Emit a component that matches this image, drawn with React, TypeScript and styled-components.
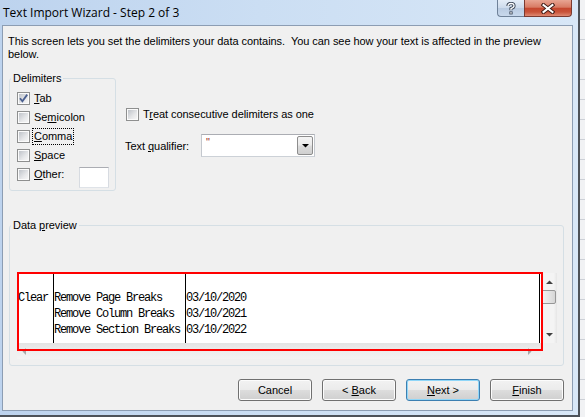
import React from 'react';
import styled, { createGlobalStyle, css } from 'styled-components';

const GlobalStyle = createGlobalStyle`
  html, body { margin: 0; padding: 0; }
  body {
    width: 585px;
    height: 417px;
    overflow: hidden;
    font-family: "Liberation Sans", Arial, sans-serif;
    background: repeating-linear-gradient(to bottom, #f1f2f4 0 19px, #cdd1d7 19px 20px);
  }
  u { text-decoration-thickness: 1px; text-underline-offset: 1px; }
`;

const Window = styled.div`
  width: 580px;
  height: 417px;
  box-sizing: border-box;
  display: flex;
  flex-direction: column;
  padding: 0 5px 4px 2px;
  border-right: 2px solid #4d5259;
  border-bottom: 2px solid #4d5259;
  background: linear-gradient(to right, #bdd3ee 0%, #cbdef3 45%, #d8e7f7 100%);
`;

const TitleBar = styled.div`
  height: 25px;
  flex: none;
  display: flex;
  align-items: center;
`;

const Title = styled.div`
  padding-left: 1px;
  font-family: "Open Sans", "Liberation Sans", sans-serif;
  font-size: 12px;
  color: #000;
`;

const Captions = styled.div`
  margin-left: auto;
  margin-right: 1px;
  align-self: flex-start;
  display: flex;
`;

const CaptionBtn = styled.div<{ $close?: boolean }>`
  height: 17px;
  box-sizing: border-box;
  display: flex;
  align-items: center;
  justify-content: center;
  border: 1px solid #6f8299;
  border-top: none;
  ${(p) =>
    p.$close
      ? css`
          width: 48px;
          border-color: #7b3a30;
          border-radius: 0 0 4px 0;
          background: linear-gradient(#e8a593 0%, #d87b64 45%, #c5472e 52%, #c9543a 75%, #df8a73 100%);
        `
      : css`
          width: 27px;
          border-right: none;
          border-radius: 0 0 0 4px;
          background: linear-gradient(#e4edf7 0%, #cddbec 48%, #b9cbe1 52%, #c8d8ec 100%);
        `}
`;

const Client = styled.div`
  flex: 1;
  display: flex;
  flex-direction: column;
  border: 1px solid #8c9db3;
  background: #f0f0f0;
  padding: 0 8px 0 5px;
  font-size: 11px;
  color: #000;
`;

const Intro = styled.p`
  margin: 9px 0 0;
  line-height: 13px;
  letter-spacing: -0.05px;
`;

const OptionsRow = styled.div`
  display: flex;
  align-items: flex-start;
  gap: 10px;
  margin: 10px 0 0 1px;
`;

const Group = styled.fieldset<{ $w: number; $pt: number }>`
  width: ${(p) => p.$w}px;
  box-sizing: border-box;
  min-inline-size: 0;
  margin: 0;
  padding: ${(p) => p.$pt}px 6px 6px 1px;
  border: 1px solid #d5dfe5;
  border-radius: 3px;
`;

const Legend = styled.legend`
  margin-left: 0;
  padding: 0 2px;
  line-height: 14px;
  font-size: 11px;
  letter-spacing: -0.05px;
`;

const CheckList = styled.div`
  display: flex;
  flex-direction: column;
  padding-left: 6px;
`;

const CheckRow = styled.div`
  height: 19px;
  display: flex;
  align-items: center;
  gap: 4px;
`;

const Box = styled.span`
  width: 13px;
  height: 13px;
  flex: none;
  box-sizing: border-box;
  position: relative;
  border: 1px solid #8e8f8f;
  padding: 1px;
  background: linear-gradient(135deg, #bfc3c9 0%, #e6e7e9 60%, #f6f6f6 100%) content-box, #fbfbfb;
  svg { position: absolute; left: -1px; top: -1px; }
`;

const Label = styled.span<{ $focus?: boolean }>`
  line-height: 13px;
  letter-spacing: -0.05px;
  white-space: nowrap;
  ${(p) =>
    p.$focus &&
    css`
      outline: 1px dotted #000;
      outline-offset: 1px;
    `}
`;

const SmallInput = styled.div`
  width: 30px;
  height: 21px;
  box-sizing: border-box;
  margin-left: auto;
  align-self: flex-start;
  margin-top: 2px;
  background: #fff;
  border: 1px solid #abadb3;
  border-color: #abadb3 #d7dbe1 #dfe3e8 #d7dbe1;
`;

const SideColumn = styled.div`
  display: flex;
  flex-direction: column;
  margin-top: 34px;
`;

const QualifierRow = styled.div`
  display: flex;
  align-items: center;
  margin-top: 10px;
  margin-left: -1px;
`;

const QualifierLabel = styled.span`
  width: 76px;
  letter-spacing: -0.05px;
`;

const Combo = styled.div`
  width: 114px;
  height: 23px;
  box-sizing: border-box;
  display: flex;
  background: #fff;
  border: 1px solid #abadb3;
  border-color: #abadb3 #c4c8ce #ccd1d7 #c4c8ce;
`;

const ComboValue = styled.span`
  flex: 1;
  padding: 1px 0 0 4px;
  line-height: 13px;
  color: #9b2a1c;
`;

const DropBtn = styled.span`
  width: 16px;
  height: 19px;
  box-sizing: border-box;
  margin: 1px 1px 1px 0;
  display: flex;
  align-items: center;
  justify-content: center;
  border: 1px solid #8d8d8d;
  border-radius: 2px;
  background: linear-gradient(#f4f4f4 0%, #ebebeb 48%, #dcdcdc 52%, #cfcfcf 100%);
`;

const PreviewGroup = styled(Group)`
  margin: 27px 0 0 1px;
`;

const Preview = styled.div`
  position: relative;
  margin-left: 6px;
  display: grid;
  grid-template-columns: 524px 16px;
  grid-template-rows: 70px 16px;
`;

const DataArea = styled.div`
  display: flex;
  background: #fff;
  overflow: hidden;
`;

const DataColumn = styled.div<{ $w: number; $pad?: number }>`
  width: ${(p) => p.$w}px;
  box-sizing: border-box;
  flex: none;
  padding: 17px 0 0 ${(p) => p.$pad ?? 0}px;
  border-right: 1px solid #000;
  font-family: "Liberation Mono", "Courier New", monospace;
  font-size: 12px;
  letter-spacing: -1.2px;
  line-height: 16px;
  white-space: pre;
  color: #000;
`;

const VScroll = styled.div`
  display: flex;
  flex-direction: column;
  background: linear-gradient(to right, #e6e6e6 0%, #f4f4f4 20%, #f4f4f4 80%, #e6e6e6 100%);
`;

const ArrowCell = styled.div<{ $h: number }>`
  height: ${(p) => p.$h}px;
  flex: none;
  display: flex;
  align-items: center;
  justify-content: center;
`;

const Thumb = styled.div`
  width: 15px;
  height: 14px;
  box-sizing: border-box;
  border: 1px solid #979797;
  border-radius: 2px;
  background: linear-gradient(to right, #f3f3f3 0%, #e6e6e6 50%, #d6d6d6 100%);
`;

const Spacer = styled.div`
  flex: 1;
`;

const HScroll = styled.div`
  display: flex;
  align-items: center;
  justify-content: space-between;
  padding: 0 9px 0 5px;
  background: linear-gradient(#e3e3e3 0%, #ececec 40%, #f3f3f3 100%);
`;

const Corner = styled.div`
  background: #f0f0f0;
`;

const Annotation = styled.div`
  position: absolute;
  left: 0;
  top: -1px;
  width: 526px;
  height: 79px;
  box-sizing: border-box;
  border: 2px solid #ff0000;
  pointer-events: none;
`;

const ButtonRow = styled.div`
  display: flex;
  justify-content: flex-end;
  gap: 10px;
  margin-top: 13px;
`;

const Button = styled.button<{ $default?: boolean }>`
  width: 74px;
  height: 22px;
  box-sizing: border-box;
  padding: 0;
  font-family: "Liberation Sans", Arial, sans-serif;
  font-size: 11px;
  color: #000;
  border: 1px solid #707070;
  border-radius: 3px;
  background: linear-gradient(#f2f2f2 0%, #ebebeb 50%, #dddddd 51%, #cfcfcf 100%);
  box-shadow: inset 0 0 0 1px #fcfcfc;
  ${(p) =>
    p.$default &&
    css`
      border-color: #3c7fb1;
      box-shadow: inset 0 0 0 1px #8fd6f8;
    `}
`;

const Check = () => (
  <svg width="13" height="13" viewBox="0 0 13 13">
    <path d="M3 6.2 L5.4 9.2 L10.2 2.6" fill="none" stroke="#4a5f8f" strokeWidth="1.8" />
  </svg>
);

const Tri = ({ dir, color }: { dir: 'up' | 'down' | 'left' | 'right'; color: string }) => {
  const pts = {
    up: '0,4 7,4 3.5,0.5',
    down: '0,0 7,0 3.5,3.5',
    left: '4,0 4,7 0.5,3.5',
    right: '0,0 0,7 3.5,3.5',
  }[dir];
  const vertical = dir === 'up' || dir === 'down';
  return (
    <svg width={vertical ? 7 : 4} height={vertical ? 4 : 7} viewBox={vertical ? '0 0 7 4' : '0 0 4 7'}>
      <polygon points={pts} fill={color} />
    </svg>
  );
};

const HelpIcon = () => (
  <svg width="10" height="13" viewBox="0 0 10 13">
    <path d="M2 4 Q2 1.5 5 1.5 Q8 1.5 8 4 Q8 5.6 5 6.6 L5 8.3" fill="none" stroke="#3a4656" strokeWidth="3.2" />
    <rect x="3.4" y="9.4" width="3.2" height="3" fill="#3a4656" />
    <path d="M2 4 Q2 1.5 5 1.5 Q8 1.5 8 4 Q8 5.6 5 6.6 L5 8.3" fill="none" stroke="#fff" strokeWidth="1.3" />
    <rect x="4.3" y="10.2" width="1.4" height="1.4" fill="#fff" />
  </svg>
);

const CloseIcon = () => (
  <svg width="14" height="11" viewBox="0 0 14 11">
    <path d="M2.5 2 L11.5 9 M11.5 2 L2.5 9" stroke="#3e1b16" strokeWidth="4" strokeLinecap="square" />
    <path d="M2.5 2 L11.5 9 M11.5 2 L2.5 9" stroke="#fff" strokeWidth="2" strokeLinecap="square" />
  </svg>
);

type Delim = { pre: string; key: string; post: string; checked?: boolean; focus?: boolean; input?: boolean };

const delimiters: Delim[] = [
  { pre: '', key: 'T', post: 'ab', checked: true },
  { pre: 'Se', key: 'm', post: 'icolon' },
  { pre: '', key: 'C', post: 'omma', focus: true },
  { pre: '', key: 'S', post: 'pace' },
  { pre: '', key: 'O', post: 'ther:', input: true },
];

const columns = [
  { w: 37, pad: 1, lines: ['Clear'] },
  { w: 132, lines: ['Remove Page Breaks', 'Remove Column Breaks', 'Remove Section Breaks'] },
  { w: 354, lines: ['03/10/2020', '03/10/2021', '03/10/2022'] },
];

export default function App() {
  return (
    <>
      <GlobalStyle />
      <Window>
        <TitleBar>
          <Title>Text Import Wizard - Step 2 of 3</Title>
          <Captions>
            <CaptionBtn>
              <HelpIcon />
            </CaptionBtn>
            <CaptionBtn $close>
              <CloseIcon />
            </CaptionBtn>
          </Captions>
        </TitleBar>

        <Client>
          <Intro>
            This screen lets you set the delimiters your data contains.&nbsp; You can see how your text is affected in
            the preview below.
          </Intro>

          <OptionsRow>
            <Group $w={107} $pt={4}>
              <Legend>Delimiters</Legend>
              <CheckList>
                {delimiters.map((d) => (
                  <CheckRow key={d.key + d.post}>
                    <Box>{d.checked && <Check />}</Box>
                    <Label $focus={d.focus}>
                      {d.pre}
                      <u>{d.key}</u>
                      {d.post}
                    </Label>
                    {d.input && <SmallInput />}
                  </CheckRow>
                ))}
              </CheckList>
            </Group>

            <SideColumn>
              <CheckRow>
                <Box />
                <Label>
                  T<u>r</u>eat consecutive delimiters as one
                </Label>
              </CheckRow>
              <QualifierRow>
                <QualifierLabel>
                  Text <u>q</u>ualifier:
                </QualifierLabel>
                <Combo>
                  <ComboValue>"</ComboValue>
                  <DropBtn>
                    <Tri dir="down" color="#000" />
                  </DropBtn>
                </Combo>
              </QualifierRow>
            </SideColumn>
          </OptionsRow>

          <PreviewGroup $w={555} $pt={41}>
            <Legend>
              Data <u>p</u>review
            </Legend>
            <Preview>
              <DataArea>
                {columns.map((c, i) => (
                  <DataColumn key={i} $w={c.w} $pad={c.pad}>
                    {c.lines.join('\n')}
                  </DataColumn>
                ))}
              </DataArea>
              <VScroll>
                <ArrowCell $h={17}>
                  <Tri dir="up" color="#404040" />
                </ArrowCell>
                <Thumb />
                <Spacer />
                <ArrowCell $h={17}>
                  <Tri dir="down" color="#404040" />
                </ArrowCell>
              </VScroll>
              <HScroll>
                <Tri dir="left" color="#a8a8a8" />
                <Tri dir="right" color="#a8a8a8" />
              </HScroll>
              <Corner />
              <Annotation />
            </Preview>
          </PreviewGroup>

          <ButtonRow>
            <Button>Cancel</Button>
            <Button>
              &lt; <u>B</u>ack
            </Button>
            <Button $default>
              <u>N</u>ext &gt;
            </Button>
            <Button>
              <u>F</u>inish
            </Button>
          </ButtonRow>
        </Client>
      </Window>
    </>
  );
}
